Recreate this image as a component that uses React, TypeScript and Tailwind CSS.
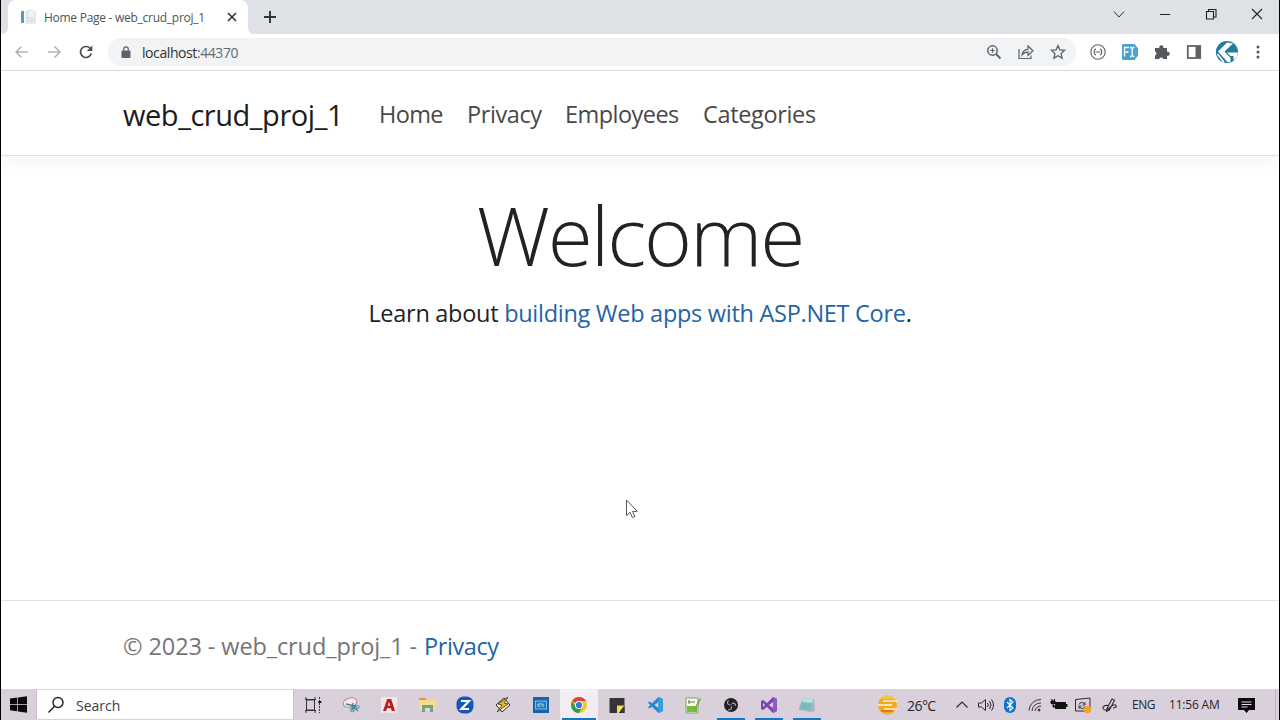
import type { ReactNode } from "react";

function TabStrip() {
  return (
    <div className="flex h-[34px] shrink-0 items-start bg-[#dee1e6]">
      <div className="flex h-[34px] w-[7px] items-end overflow-hidden bg-white">
        <div className="h-full w-full rounded-br-[6px] bg-[#dee1e6]" />
      </div>
      <div className="flex h-[34px] w-[240px] items-center rounded-t-[8px] bg-white pl-[13px] pr-[8px]">
        <svg width="15" height="16" viewBox="0 0 15 16" className="shrink-0">
          <rect x="0" y="2" width="3" height="12" fill="#5d9bb5" />
          <rect x="4" y="2" width="11" height="13" fill="#e6ebee" />
          <path d="M7 1h4l3 3v7H7z" fill="#f1f4f6" stroke="#d3dadf" strokeWidth=".7" />
          <path d="M6 9h7M6 12h6" stroke="#cdd5da" />
        </svg>
        <span className="ml-[8px] mt-[1px] w-[182px] whitespace-nowrap text-[12px] tracking-[-0.27px] text-[#505458]">Home Page - web_crud_proj_1</span>
        <svg width="12" height="12" viewBox="0 0 12 12" className="shrink-0" stroke="#303236" strokeWidth="1.6">
          <path d="M2 2l8 8M10 2l-8 8" />
        </svg>
      </div>
      <div className="flex h-[34px] w-1.5 overflow-hidden bg-white">
        <div className="h-full w-full rounded-bl-[6px] bg-[#dee1e6]" />
      </div>
      <svg width="14" height="14" viewBox="0 0 14 14" className="ml-[9px] mt-[10px]" stroke="#303438" strokeWidth="1.9">
        <path d="M7 1v12M1 7h12" />
      </svg>
      <div className="ml-auto mr-[16px] mt-[8px] flex items-center gap-[34px]">
        <svg width="12" height="12" viewBox="0 0 12 12" fill="none" stroke="#333" strokeWidth="1"><path d="M1 3.500l5 5.500 5-5.500" /></svg>
        <svg width="12" height="12" viewBox="0 0 12 12" stroke="#222" strokeWidth="1"><path d="M1 6.500h10" /></svg>
        <svg width="12" height="12" viewBox="0 0 12 12" fill="none" stroke="#222" strokeWidth="1.1"><path d="M1.500 3.500h7v7.500h-7zM3.500 3.500v-2h7.500v7.500h-2.500" /></svg>
        <svg width="12" height="12" viewBox="0 0 12 12" stroke="#222" strokeWidth="1.1"><path d="M1 1l10 10M11 1L1 11" /></svg>
      </div>
    </div>
  );
}

function Glyph({ children, w = 18, color = "#5f6368" }: { children: ReactNode; w?: number; color?: string }) {
  return (
    <svg width={w} height={w} viewBox="0 0 18 18" fill="none" stroke={color} strokeWidth="1.5" className="shrink-0">
      {children}
    </svg>
  );
}

function Toolbar() {
  return (
    <div className="flex h-[37px] shrink-0 items-center border-b border-[#d9dbdd] bg-white pl-[12px] pr-[12px]">
      <div className="flex gap-[14px]">
        <Glyph color="#b0b3b6"><path d="M15 9H3.500M8.500 3.500L3 9l5.500 5.500" /></Glyph>
        <Glyph color="#b0b3b6"><path d="M3 9h11.500M9.500 3.500L15 9l-5.500 5.500" /></Glyph>
        <Glyph color="#4b4f53">
          <path d="M14.300 10.500A5.500 5.500 0 1 1 13 5.200" strokeWidth="1.7" />
          <path d="M15.300 2.500v5.500H9.800z" fill="#4b4f53" stroke="none" />
        </Glyph>
      </div>
      <div className="ml-[13px] flex h-[28px] w-[968px] items-center rounded-full bg-[#f1f3f4] pl-[13px] pr-[9px]">
        <svg width="10" height="13" viewBox="0 0 10 13" className="shrink-0">
          <rect x=".5" y="4.500" width="9" height="7.500" rx="1" fill="#5f6368" />
          <path d="M2.700 5V3.200a2.300 2.300 0 0 1 4.600 0V5" fill="none" stroke="#5f6368" strokeWidth="1.200" />
        </svg>
        <span className="ml-[11px] whitespace-nowrap text-[14px] tracking-[-0.42px] text-[#303236]">localhost<span className="text-[#666a6e]">:44370</span></span>
        <div className="ml-auto flex gap-[14px]">
          <Glyph>
            <circle cx="7.500" cy="7.500" r="4.700" />
            <path d="M11 11l4.500 4.500" strokeWidth="2" />
            <path d="M5.200 7.500h4.600M7.500 5.200v4.600" strokeWidth="1.200" />
          </Glyph>
          <Glyph>
            <path d="M2 6v9.500h12V12.500M5 12c.5-4 2.500-5.500 6-5.700V3l5 4.700-5 4.600V9.200C8.500 9.200 6.500 10 5 12z" strokeWidth="1.200" />
          </Glyph>
          <Glyph>
            <path d="M9 2.500l1.900 4.300 4.700.5-3.500 3.100 1 4.700L9 12.700l-4.100 2.400 1-4.700-3.500-3.100 4.700-.5z" strokeWidth="1.300" />
          </Glyph>
        </div>
      </div>
      <div className="ml-[13px] flex items-center gap-[14px]">
        <Glyph>
          <circle cx="9" cy="9" r="7.200" strokeWidth="1.100" />
          <path d="M6.800 5.700c-2.200 1.500-2.200 5.100 0 6.600M11.200 5.700c2.200 1.500 2.200 5.100 0 6.600M6.500 9h5" strokeWidth="1.200" />
        </Glyph>
        <Glyph>
          <path d="M2.500 1h11L17 5.500v7L13.500 17h-11A1.500 1.500 0 0 1 1 15.500v-13A1.500 1.500 0 0 1 2.500 1z" fill="#4aa3cf" stroke="none" />
          <path d="M3.500 13.500v-9h4.500M3.500 9h4M9 4.500h1l1.200 1 1.200-1h1M11.200 5.500v7M9 13.500h1l1.200-1 1.200 1h1" stroke="#fff" strokeWidth="1.300" />
        </Glyph>
        <Glyph>
          <path d="M2 5h4.300a2.100 2.100 0 1 1 4 0H14v3.800a2.100 2.100 0 1 1 0 4V16h-3.800a2.100 2.100 0 0 0-4 0H2v-3.500a2.100 2.100 0 0 0 0-4z" fill="#55595d" stroke="none" />
        </Glyph>
        <Glyph>
          <rect x="2.800" y="3" width="12.400" height="12" strokeWidth="1.800" />
          <path d="M10.500 3h5v12h-5z" fill="#5f6368" stroke="none" />
        </Glyph>
      </div>
      <svg width="22" height="22" viewBox="0 0 22 22" className="ml-[13px] shrink-0">
        <circle cx="11" cy="11" r="11" fill="#287a98" />
        <path d="M11 1.500L2 10.500l9.500 10.500 3 0V17L8.500 10.500 17 2.500z" fill="#fff" />
        <path d="M3.500 3.500A10.500 10.500 0 0 0 9 21.500L1.500 11z" fill="#287a98" />
        <path d="M1.500 13l6.500 8.400" stroke="#fff" strokeWidth="1.600" />
        <path d="M11 11.500h10.800c0 3-1.500 6-4.300 8v-4.500h-3z" fill="#fff" />
      </svg>
      <svg width="4" height="14" viewBox="0 0 4 14" className="ml-[18px] shrink-0" fill="#55595d">
        <circle cx="2" cy="2" r="1.500" /><circle cx="2" cy="7" r="1.500" /><circle cx="2" cy="12" r="1.500" />
      </svg>
    </div>
  );
}

function Page() {
  return (
    <div className="flex h-[618px] shrink-0 flex-col bg-white">
      <header className="flex h-[85px] shrink-0 items-center whitespace-nowrap border-b border-[#dfe1e3] pl-[122px] pt-[3px] shadow-[0_8px_18px_rgba(0,0,0,0.04)]">
        <span className="w-[256px] text-[29px] tracking-[-0.45px] text-[#1c1c1c]">web_crud_proj_1</span>
        <nav className="flex text-[23.500px] text-[#484848]">
          <a className="w-[88px] tracking-[-0.65px]">Home</a>
          <a className="w-[98px] tracking-[-0.4px]">Privacy</a>
          <a className="w-[138px] tracking-[-0.55px]">Employees</a>
          <a className="tracking-[-0.35px]">Categories</a>
        </nav>
      </header>
      <main className="flex flex-1 flex-col items-center whitespace-nowrap pt-[32px]">
        <h1 className="h-[92px] text-[82px] font-light leading-[92px] tracking-[-2.100px] text-[#222]">Welcome</h1>
        <p className="mt-[15px] text-[23.500px] leading-[36px] tracking-[-0.28px] text-[#222]">
          Learn about <a className="text-[#2463a6]">building Web apps with ASP.NET Core</a>.
        </p>
        <svg width="14" height="21" viewBox="0 0 14 21" className="mt-[168px] -ml-[16px]" fill="#fff" stroke="#555" strokeWidth="1">
          <path d="M1.500 1v15.500l3.600-3.200 2.300 5.200 2.500-1.100-2.300-5h4.700z" />
        </svg>
      </main>
      <footer className="flex h-[89px] shrink-0 items-center whitespace-nowrap border-t border-[#dfe1e3] pl-[122px] pb-[1px] pt-[5px] text-[23.500px] text-[#757575]">
        <span className="w-[301px] tracking-[-0.1px]">© 2023 - web_crud_proj_1 -</span>
        <a className="tracking-[-0.4px] text-[#2463a6]">Privacy</a>
      </footer>
    </div>
  );
}

function Cell({ children, active = false, running = false }: { children: ReactNode; active?: boolean; running?: boolean }) {
  return (
    <div className={active ? "flex h-full w-[38px] flex-col items-center bg-[#f1edf3]" : "flex h-full w-[38px] flex-col items-center"}>
      <div className="flex h-[28px] items-end pb-[3px]">
        <svg width="18" height="18" viewBox="0 0 18 18" fill="none">{children}</svg>
      </div>
      {(active || running) && <div className={active ? "mt-[1px] h-[2px] w-[34px] bg-[#1676c8]" : "mt-[1px] h-[2px] w-[28px] bg-[#1676c8]"} />}
    </div>
  );
}

function Taskbar() {
  return (
    <div className="flex h-[31px] shrink-0 items-center bg-[#d9d0db] whitespace-nowrap">
      <div className="flex w-[35px] items-center justify-center">
        <svg width="17" height="17" viewBox="0 0 17 17" fill="#080808"><path d="M0 2.500L7.300 1.500V8H0zM8 1.400L17 .2V8H8zM0 8.800h7.300v6.500L0 14.300zM8 8.800h9v7.900l-9-1.300z" /></svg>
      </div>
      <div className="flex h-[29px] w-[258px] items-center border-x border-[#c9c3cb] bg-white pl-[10px]">
        <svg width="18" height="18" viewBox="0 0 18 18" fill="none" stroke="#222" strokeWidth="1.400"><circle cx="11" cy="6.500" r="5" /><path d="M7.500 10.200L1.500 16.500" /></svg>
        <span className="ml-[11px] mt-[2px] text-[14px] text-[#3b3b3b]">Search</span>
      </div>
      <div className="flex h-full">
        <Cell><path d="M2 1v3h9V1M2 17v-3h9v3M2.500 4v10M10.500 4v10M1 3.500h11M1 14.500h11" stroke="#35323a" /><path d="M15.500 1v16" stroke="#35323a" strokeDasharray="2 1" /><path d="M14.300 6h3" stroke="#111" strokeWidth="2" /></Cell>
        <Cell><ellipse cx="8" cy="6.500" rx="7" ry="4.500" fill="#f2e8ef" stroke="#c78086" transform="rotate(-15 8 6.500)" /><path d="M4 8l9 2M11 7l-1 5M11 10l5 5M14 9l-4 5" stroke="#4285a5" strokeWidth="1.300" /><circle cx="10.500" cy="14" r="1.800" stroke="#4285a5" /><circle cx="15.500" cy="11" r="1.500" stroke="#4285a5" /></Cell>
        <Cell><path d="M1 1h16v16H1z" fill="#f6e3e3" /><path fillRule="evenodd" d="M3 15L7.200 3h4L15 15h-3.300l-.8-2.700H7L6.100 15zM7.800 9.800h2.500L9 5.800z" fill="#b51f2b" /></Cell>
        <Cell><path d="M1 2h6l1.500 2H17v10H1z" fill="#f7dc85" /><path d="M1 2h6l1.500 2H1z" fill="#dc9b2c" /><path d="M4 9h11v7h-3v-4H7v4H4z" fill="#6aa39a" /></Cell>
        <Cell><rect x=".5" y=".5" width="17" height="17" rx="7" fill="#1455c0" /><path d="M5 5h8L5.500 13H13" stroke="#fff" strokeWidth="2.200" /></Cell>
        <Cell><path d="M2 9l8-7 6 7-8 7z" fill="#f5efcf" stroke="#373126" /><path d="M14 1L4 8l4 1-5 7 11-8-4-1z" fill="#e9b62d" stroke="#40361c" strokeWidth=".8" /></Cell>
        <Cell><path d="M1 1h16v16H1z" fill="#1465ae" /><rect x="3.500" y="5" width="11" height="8" fill="#2479ba" stroke="#7fc0e6" /><path d="M6 11V8h5v3M8 11v-1.500" stroke="#b8def2" /></Cell>
        <Cell active>
          <circle cx="9" cy="9" r="8" fill="#f5c52e" /><path d="M9 9L2.100 5A8 8 0 0 1 15.900 5H9z" fill="#dd4438" /><path d="M2.100 5A8 8 0 0 0 9 17l3.500-6L9 9 5.500 11z" fill="#2a9d59" /><circle cx="9" cy="9" r="4" fill="#fff" /><circle cx="9" cy="9" r="3.100" fill="#3977d7" />
        </Cell>
        <Cell><path d="M1.500 2h15v15h-15z" fill="#35343a" /><path d="M9 9.500h7.500L11 17H9z" fill="#f4dc48" /><path d="M16.500 9.500V17H11z" fill="#35343a" /></Cell>
        <Cell><path d="M12.500 1L17 3v12l-4.500 2L2 6.800l1.600-1.300L12.500 12V6L3.600 12.500 2 11.200z" fill="#2389ca" /><path d="M12.500 1L17 3v12l-4.500 2z" fill="#3a9fd8" /></Cell>
        <Cell><path d="M2 2h12v15H2z" fill="#f2faec" stroke="#77a85a" /><path d="M3 10h10v6H3z" fill="#78bd35" /><path d="M4 6h7M5 4v4" stroke="#777" /><path d="M16 2l-5 9-1 3 2.500-2L17 3z" fill="#8c9956" /></Cell>
        <Cell running><circle cx="9" cy="9" r="7" fill="#202025" /><path d="M8.500 9c-3 0-4-2.500-2-4.500M9.500 8.500c1.500-2.500 4.500-1 4 1.500M9 10c1.500 2-.5 4.500-3 3.500" stroke="#aaa5ae" strokeWidth="1.100" /></Cell>
        <Cell running><path fillRule="evenodd" d="M13 1l4 2v12l-4 2-6-6-4 3-2-1V5l2-1 4 3zM13 6l-4 3 4 3zM3 7v4l2-2z" fill="#7b45af" /><path d="M13 1l4 2v12l-4 2z" fill="#8d5bc0" /></Cell>
        <Cell running><path d="M5 2l11 1 1 12-4 1L1 14z" fill="#a7b5bc" /><path d="M5 2l10 1-3 11L1 13z" fill="#77bbc2" /><path d="M5 2l10 1-1 4L4 6z" fill="#b6e3e5" /></Cell>
      </div>
      <div className="ml-[51px] flex h-full items-center pt-[1px] text-[#29252d]">
        <svg width="22" height="22" viewBox="0 0 22 22"><circle cx="10.500" cy="11" r="9.500" fill="#f0aa25" /><path d="M3 5a9.500 9.500 0 0 1 15 0z" fill="#f6c63e" /><path d="M6 7h15M1 11h14M7 15h13" stroke="#ffe2a1" strokeWidth="2" /><path d="M4 17h12" stroke="#df7921" strokeWidth="2" /></svg>
        <span className="ml-[8px] w-[48px] text-[14px] tracking-[-0.55px]">26°C</span>
        <svg width="14" height="14" viewBox="0 0 14 14" fill="none" stroke="#29252d" strokeWidth="1.100"><path d="M1.500 9.500L7 4l5.500 5.500" /></svg>
        <svg width="18" height="16" viewBox="0 0 18 16" className="ml-[8px]" fill="none" stroke="#29252d"><path d="M1.500 6h3L8.500 2.500v11L4.500 10h-3zM10.500 6q1.500 2 0 4M12.500 4q3 4 0 8M14.500 2.500q4 5.500 0 11" /></svg>
        <svg width="14" height="18" viewBox="0 0 14 18" className="ml-[8px]"><rect x="1" y="1" width="12" height="16" rx="6" fill="#0b75c9" /><path d="M4 6l6 6-3 2.500v-11L10 6l-6 6" fill="none" stroke="#fff" strokeWidth="1.100" /></svg>
        <svg width="16" height="16" viewBox="0 0 16 16" className="ml-[10px]" fill="none" stroke="#3a363d"><path d="M2 13.500A11.500 11.500 0 0 1 14 2.500M5 14a8.500 8.500 0 0 1 9-8M8 14a5.500 5.500 0 0 1 6-4.800" /><circle cx="12" cy="13" r="1" fill="#222" /></svg>
        <svg width="18" height="16" viewBox="0 0 18 16" className="ml-[7px]"><path d="M5 5h11v7H5zM16 7h1.500v3H16z" fill="#111" /><path d="M1 4h4v2.500H1zM2 2v2M4.500 2v2M3 7v3h3" stroke="#111" fill="#111" /></svg>
        <svg width="18" height="18" viewBox="0 0 18 18" className="ml-[6px]"><path d="M1.500 3.500L16 2v13H1.500z" fill="none" stroke="#302c33" /><path d="M5 8.500a3 3 0 0 1 5-1l1-1v2.500H8.500M11 10.500a3 3 0 0 1-5 1l-1 1V10h2.500" fill="none" stroke="#302c33" /><circle cx="13.500" cy="13.500" r="3.700" fill="#f3a12a" /></svg>
        <svg width="16" height="17" viewBox="0 0 16 17" className="ml-[10px]" fill="none" stroke="#302c33" strokeWidth="1.100"><path d="M5 11.500L10 2l2.500 1.300L7.500 12.800 4.500 14.500zM6 8.500C2 8 0 10 1.500 12s4 1 6.500-1.500 5-3.500 6-2-1 2.500-3 2.500" /></svg>
        <span className="ml-[14px] w-[37px] text-[12px] tracking-[-0.5px]">ENG</span>
        <span className="w-[69px] text-[12px] tracking-[-0.2px]">11:56 AM</span>
        <svg width="17" height="17" viewBox="0 0 17 17"><path d="M0 1h17v12h-6l-2.500 3L6 13H0z" fill="#09090b" /><path d="M3.500 5h10M3.500 7.500h10M3.500 10h6" stroke="#e0dbe2" strokeWidth="1" /></svg>
      </div>
      <div className="ml-auto mr-[3px] h-full border-l border-[#bdb5bf]" />
    </div>
  );
}

export default function App() {
  return (
    <div className="flex h-[720px] w-[1280px] flex-col overflow-hidden border-x border-black bg-white font-['Open_Sans',sans-serif]">
      <TabStrip />
      <Toolbar />
      <Page />
      <Taskbar />
    </div>
  );
}
